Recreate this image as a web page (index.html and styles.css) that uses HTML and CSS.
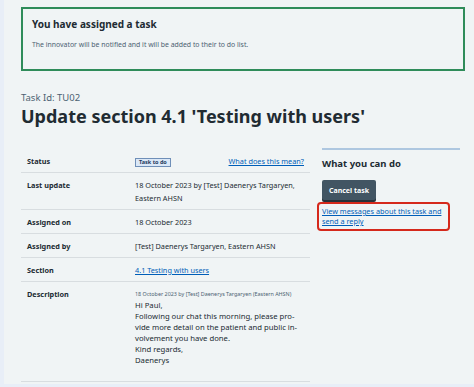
FILE: index.html
```html
<!DOCTYPE html>
<html>
<head>
    <title>Task TU02</title>
    <link rel="stylesheet" href="styles.css">
</head>
<body>
    <div class="frame">
        <div class="banner">
            <h3>You have assigned a task</h3>
            <p>The innovator will be notified and it will be added to their to do list.</p>
        </div>

        <span class="caption">Task Id: TU02</span>
        <h1>Update section 4.1 'Testing with users'</h1>

        <div class="layout">
            <dl class="summary">
                <div class="row">
                    <dt>Status</dt>
                    <dd><span class="tag">Task to do</span></dd>
                    <dd class="action"><a href="#">What does this mean?</a></dd>
                </div>
                <div class="row">
                    <dt>Last update</dt>
                    <dd>18 October 2023 by [Test] Daenerys Targaryen, Eastern AHSN</dd>
                </div>
                <div class="row">
                    <dt>Assigned on</dt>
                    <dd>18 October 2023</dd>
                </div>
                <div class="row">
                    <dt>Assigned by</dt>
                    <dd>[Test] Daenerys Targaryen, Eastern AHSN</dd>
                </div>
                <div class="row">
                    <dt>Section</dt>
                    <dd><a href="#">4.1 Testing with users</a></dd>
                </div>
                <div class="row row-last">
                    <dt>Description</dt>
                    <dd>
                        <div class="meta">18 October 2023 by [Test] Daenerys Targaryen (Eastern AHSN)</div>
                        <div class="message">Hi Paul,<br>Following our chat this morning, please pro-<br>vide more detail on the patient and public in-<br>volvement you have done.<br>Kind regards,<br>Daenerys</div>
                    </dd>
                </div>
            </dl>

            <aside class="sidebar">
                <h2>What you can do</h2>
                <button class="btn-secondary">Cancel task</button>
                <div class="highlight">
                    <a href="#">View messages about this task and send a reply</a>
                </div>
            </aside>
        </div>
    </div>
</body>
</html>
```

FILE: styles.css
```css
html, body {
    margin: 0;
    padding: 0;
    height: 100%;
}
body {
    font-family: "Noto Sans", "Open Sans", sans-serif;
    background-color: #e8eef7;
    color: #212b32;
}
.frame {
    box-sizing: border-box;
    height: 384px;
    width: 471px;
    margin-left: 4px;
    background-color: #f0f4f5;
    padding: 7px 10px 0 17px;
    overflow: hidden;
}
.banner {
    border: 2px solid #2f8c5a;
    padding: 8px 10px 19px 9px;
    margin-bottom: 21px;
}
.banner h3 {
    margin: 0 0 9px 0;
    font-size: 10px;
    line-height: 14px;
    font-weight: bold;
}
.banner p {
    margin: 0;
    font-size: 6.9px;
    line-height: 10px;
    color: #4c6272;
}
.caption {
    display: block;
    font-size: 9.5px;
    color: #4c6272;
    line-height: 11px;
}
h1 {
    margin: 0 0 20px 0;
    font-size: 18px;
    line-height: 26px;
    font-weight: bold;
}
.layout {
    display: flex;
    gap: 12px;
}
.summary {
    margin: 0;
    width: 289px;
    font-size: 7.3px;
    line-height: 13px;
}
.row {
    display: flex;
    border-bottom: 1px solid #d8dde0;
    padding: 6px 0 4px 6px;
}
.row-last {
    padding-bottom: 15px;
}
.row dt {
    width: 108px;
    font-weight: bold;
    flex-shrink: 0;
}
.row dd {
    margin: 0;
    flex: 1;
}
.row .action {
    flex: 0 0 auto;
    padding-right: 6px;
}
a {
    color: #005eb8;
}
.tag {
    display: inline-block;
    font-size: 5.5px;
    font-weight: bold;
    line-height: 7px;
    padding: 0 3px;
    color: #1d3a5e;
    background-color: #dbe8f7;
    border: 1px solid #6f8fb8;
    vertical-align: middle;
}
.meta {
    font-size: 5.4px;
    line-height: 9px;
    color: #4c6272;
    margin-top: 2px;
}
.message {
    font-size: 7.7px;
    line-height: 11px;
    margin-top: 1px;
}
.sidebar {
    width: 138px;
    border-top: 2px solid #aec7e0;
    padding-top: 7px;
    margin-top: -1px;
    align-self: flex-start;
}
.sidebar h2 {
    margin: 0 0 6px 0;
    font-size: 9.5px;
    line-height: 13px;
}
button {
    font-family: inherit;
    font-size: 7px;
    font-weight: bold;
    line-height: 9px;
    padding: 6px 7px 5px 7px;
    border: none;
    border-radius: 2px;
    cursor: pointer;
}
.btn-secondary {
    background-color: #425563;
    color: white;
    box-shadow: 0 2px 0 #263139;
}
.highlight {
    margin: 2px 10px 0 -5px;
    border: 2px solid #d5281b;
    border-radius: 4px;
    padding: 2px 3px 3px 3px;
    font-size: 7.3px;
    line-height: 10px;
}
```
